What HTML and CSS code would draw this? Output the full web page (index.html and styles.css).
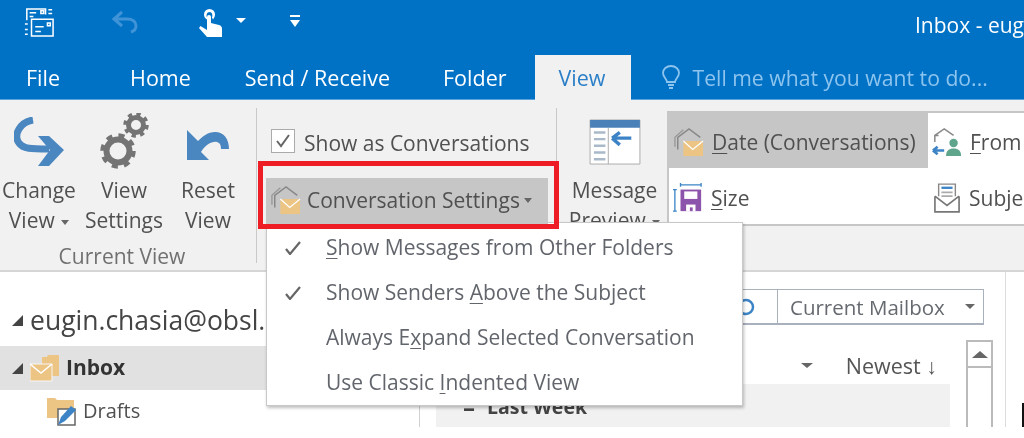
FILE: index.html
```html
<!DOCTYPE html>
<html lang="en">
<head>
<meta charset="utf-8">
<title>Inbox - Outlook</title>
<link rel="stylesheet" href="styles.css">
</head>
<body>
<div class="app">
  <header class="titlebar">
    <svg class="ic-app" viewBox="0 0 32 32" fill="none" stroke="#fff" stroke-width="1.6"><path d="M3 14V2h20v6M6 6h7M6 10h4M18 4h3v3h-3zM26 3h4M26 7h4M1 18h3M1 24h3M1 29h3"/><path d="M8 13h23v18H8z"/><path d="M12 21h9M12 26h6M25 17h3v3h-3z"/></svg>
    <svg class="ic-undo" viewBox="0 0 26 24" fill="none" stroke="#3f93d6" stroke-width="3"><path d="M10 2 2 9l8 7M3 9h12c6 0 9 3 9 7 0 3-2 5-5 6"/></svg>
    <svg class="ic-touch" viewBox="0 0 24 28" fill="#fff"><path d="M6 5.500a5.500 5.500 0 0 1 11 0c0 2-1 3.500-2 5l-1-2c1-2.500 0-5.500-2.500-5.500S8 6 9 8.500v2C7 9.500 6 7.500 6 5.500z"/><path d="M9 8a2 2 0 0 1 4 0v6l8 2c2 .5 3 2 3 4v8H9l-8-9 1.500-2 6.500 4z"/></svg>
    <svg class="ic-caret-w" viewBox="0 0 10 5" fill="#fff"><path d="M0 0h10L5 5z"/></svg>
    <svg class="ic-custom" viewBox="0 0 10 12" fill="#fff"><path d="M0 0h10v2H0zM0 5h10L5 12z"/></svg>
    <div class="title-text">Inbox - eugin.chasia@obsl.com - Outlook</div>
  </header>

  <nav class="tabs">
    <span class="tab tab-file">File</span>
    <span class="tab">Home</span>
    <span class="tab">Send / Receive</span>
    <span class="tab tab-folder">Folder</span>
    <span class="tab tab-active">View</span>
    <span class="tell">
      <svg class="ic-bulb" viewBox="0 0 20 24" fill="none" stroke="#8cc4ee" stroke-width="1.800"><path d="M6 17c0-3-4-5-4-9a8 7 0 0 1 16 0c0 4-4 6-4 9zM7 20h6M8 23h4"/></svg>
      Tell me what you want to do...
    </span>
  </nav>

  <section class="ribbon">
    <div class="group group-view">
      <div class="big-row">
        <div class="big big-change">
          <div class="big-icon">
            <svg class="ic-change" viewBox="0 0 50 50"><path d="M19 3C6 5-1 18 5 26c4 6 12 6 30 6" fill="none" stroke="#4a86c0" stroke-width="7"/><path d="M24 19h11l15 14-15 16H24l12-16z" fill="#4a86c0"/></svg>
          </div>
          <div>Change</div>
          <div>View <i class="caret"></i></div>
        </div>
        <div class="big big-settings">
          <div class="big-icon">
            <svg class="ic-gears" viewBox="0 0 50 58" fill="none" stroke="#747474"><circle cx="19" cy="38" r="11.500" stroke-width="6"/><circle cx="19" cy="38" r="15.500" stroke-width="4.500" stroke-dasharray="6 6.170"/><circle cx="37" cy="12" r="7.500" stroke-width="5"/><circle cx="37" cy="12" r="11" stroke-width="3.500" stroke-dasharray="4.300 4.340"/></svg>
          </div>
          <div>View</div>
          <div>Settings</div>
        </div>
        <div class="big big-reset">
          <div class="big-icon">
            <svg class="ic-reset" viewBox="0 0 44 32" fill="#4a86c0"><path d="M1 1v30h22l-8-8C19 16 26 12 31 13c3 1 4 3 4 7h8C43 10 38 3 29 3c-7 0-12 4-17 9z"/></svg>
          </div>
          <div>Reset</div>
          <div>View</div>
        </div>
      </div>
      <div class="group-label">Current View</div>
    </div>
    <div class="sep"></div>
    <div class="group group-conv">
      <label class="check-row">
        <span class="checkbox"><svg viewBox="0 0 22 22" fill="none" stroke="#666" stroke-width="2"><path d="M5 11l4 5 8-11"/></svg></span>
        Show as Conversations
      </label>
      <div class="frame">
        <div class="conv-btn">
          <svg class="ic-conv" viewBox="0 0 32 32"><path d="M4 24V11L16 2l12 9" fill="none" stroke="#888" stroke-width="1.600"/><path d="M1 21V11L10 3" fill="none" stroke="#999" stroke-width="1.500"/><path d="M10 15h21v16H10z" fill="#ecc483"/><path d="M10 15l10 9 11-9" fill="none" stroke="#fff" stroke-width="1.300"/></svg>
          Conversation Settings
          <i class="caret caret-conv"></i>
        </div>
      </div>
    </div>
    <div class="sep"></div>
    <div class="group group-msg">
      <div class="big-icon">
        <svg class="ic-msg" viewBox="0 0 54 48"><path d="M1 1h52v46H1z" fill="#fff" stroke="#aaa"/><path d="M1 1h52v8H1z" fill="#4a80b8"/><path d="M20 9v38" stroke="#aaa"/><path d="M5 14h12M5 21h12M5 28h12M5 35h12M5 42h12" stroke-width="2.600" stroke="#a9b9c9"/><path d="M24 20h20M24 20l8-6M24 20l8 7" fill="none" stroke="#3d84c6" stroke-width="3.500"/></svg>
      </div>
      <div>Message</div>
      <div>Preview <i class="caret"></i></div>
    </div>
    <div class="gallery">
      <div class="g-item g-selected">
        <svg class="ic-conv g-ic" viewBox="0 0 32 32"><path d="M4 24V11L16 2l12 9" fill="none" stroke="#888" stroke-width="1.600"/><path d="M1 21V11L10 3" fill="none" stroke="#999" stroke-width="1.500"/><path d="M10 15h21v16H10z" fill="#ecc483"/><path d="M10 15l10 9 11-9" fill="none" stroke="#fff" stroke-width="1.300"/></svg>
        <span><u>D</u>ate (Conversations)</span>
      </div>
      <div class="g-item">
        <svg class="ic-conv g-ic" viewBox="0 0 32 32"><path d="M3 16V9L13 2l10 7M3 9h4" fill="none" stroke="#888" stroke-width="1.600"/><circle cx="23" cy="17" r="4.500" fill="#5fa58c"/><path d="M15 31c0-6 3-8 8-8s8 2 8 8z" fill="#5fa58c"/><path d="M1 25h12M1 25l5-4M1 25l5 4" stroke="#3d84c6" fill="none" stroke-width="2.800"/></svg>
        <span><u>F</u>rom</span>
      </div>
      <div class="g-item g-low">
        <svg class="ic-size g-ic" viewBox="0 0 32 32" fill="none"><path d="M8 2h22M8 0v4M30 0v4M2 7v23M0 7h4M0 30h4" stroke="#3d84c6" stroke-width="1.400"/><path d="M8 7h22v23H8z" fill="#8d54ab"/><path d="M12 9h14v8H12z" fill="#fff"/><path d="M14 23h10v7H14z" fill="#fff"/><path d="M18 26h3v4h-3z" fill="#8d54ab"/></svg>
        <span><u>S</u>ize</span>
      </div>
      <div class="g-item g-low">
        <svg class="ic-subject g-ic" viewBox="0 0 28 32" fill="none"><path d="M5 14V1h18v13" stroke="#888" stroke-width="1.500" fill="#fff"/><path d="M8 5h12" stroke="#3d84c6" stroke-width="2.500"/><path d="M8 10h12M8 14h12" stroke="#aaa" stroke-width="1.800"/><path d="M1 14v17h26V14M1 14l13 10 13-10" stroke="#777" stroke-width="1.800"/></svg>
        <span>Subject</span>
      </div>
    </div>
  </section>

  <main class="content">
    <aside class="pane">
      <div class="account"><i class="tri"></i><span>eugin.chasia@obsl.com</span></div>
      <div class="inbox">
        <i class="tri"></i>
        <svg class="ic-inbox" viewBox="0 0 30 28"><path d="M12 3h5l1-2h11v21H12z" fill="#ecc483"/><path d="M0 10h22v17H0z" fill="#ecc483" stroke="#f7f7f7"/><path d="M0 10l11 9 11-9" fill="none" stroke="#fff" stroke-width="1.500"/></svg>
        <b>Inbox</b>
      </div>
      <div class="drafts">
        <svg class="ic-drafts" viewBox="0 0 30 30"><path d="M0 2h8l2 2h17v18H0z" fill="#ecc483"/><path d="M11 13h17v16H11z" fill="#fff" stroke="#666" stroke-width="1.500"/><path d="M11 29l3-8L24 10l5 4L18 25z" fill="#3d84c6"/></svg>
        Drafts
      </div>
    </aside>
    <div class="mid">
      <div class="search">
        <div class="search-input"><svg class="ic-search" viewBox="0 0 12 20" fill="none" stroke="#3d84c6" stroke-width="2.500"><circle cx="3" cy="10" r="7"/></svg></div>
        <div class="scope">Current Mailbox <i class="caret caret-scope"></i></div>
      </div>
      <div class="list-wrap">
        <div class="list">
          <div class="sort"><i class="caret caret-sort"></i><span>Newest ↓</span></div>
          <div class="group-head"><b class="dash">–</b><b>Last Week</b></div>
        </div>
        <div class="scroll"><div class="scroll-up"><i class="tri-up"></i></div></div>
      </div>
    </div>
    <div class="edge"><div class="blackbar"></div></div>
  </main>

  <div class="menu">
    <div class="mi"><svg class="tick" viewBox="0 0 16 14" fill="none" stroke="#666" stroke-width="2.200"><path d="M1 8l4 5L15 1"/></svg><span><u>S</u>how Messages from Other Folders</span></div>
    <div class="mi"><svg class="tick" viewBox="0 0 16 14" fill="none" stroke="#666" stroke-width="2.200"><path d="M1 8l4 5L15 1"/></svg><span>Show Senders <u>A</u>bove the Subject</span></div>
    <div class="mi"><span>Always E<u>x</u>pand Selected Conversation</span></div>
    <div class="mi"><span>Use Classic <u>I</u>ndented View</span></div>
  </div>
</div>
</body>
</html>
```

FILE: styles.css
```css
* { box-sizing: border-box; }
html, body { margin: 0; padding: 0; background: #fff; }
body { font-family: "Open Sans", "Noto Sans", sans-serif; font-size: 21px; color: #505050; }
svg { display: block; flex: none; }
i, b { font-style: normal; }
u { text-underline-offset: 3px; text-decoration-thickness: 1px; }

.app { position: relative; width: 1024px; height: 438px; overflow: hidden; filter: blur(0.55px); }

/* title bar */
.titlebar { display: flex; align-items: center; height: 55px; padding-left: 24px; background: #0072c6; color: #fff; white-space: nowrap; overflow: hidden; }
.ic-app { width: 30px; height: 30px; margin-top: -11px; }
.ic-undo { width: 26px; height: 24px; margin-left: 58px; margin-top: -12px; }
.ic-touch { width: 24px; height: 28px; margin-left: 60px; margin-top: -10px; }
.ic-caret-w { width: 10px; height: 5px; margin-left: 14px; margin-top: -14px; }
.ic-custom { width: 10px; height: 12px; margin-left: 44px; margin-top: -14px; }
.title-text { margin-left: 615px; margin-top: -6px; flex: none; }

/* tabs */
.tabs { display: flex; align-items: stretch; gap: 6px; height: 45px; padding-left: 2px; background: #0072c6; border-bottom: 1px solid #5ba3de; color: #fff; font-size: 21.5px; white-space: nowrap; }
.tab { display: flex; align-items: center; height: 45px; padding: 0 24px; }
.tab-file { margin-right: 16px; }
.tab-folder { padding: 0 22px 0 23px; }
.tab-active { padding: 0 26px 0 24px; background: #f1f1f1; color: #2a7fc8; }
.tell { display: flex; align-items: center; gap: 11px; height: 44px; margin-left: 24px; color: #8cc4ee; font-size: 21.2px; }
.ic-bulb { width: 20px; height: 24px; }

/* ribbon */
.ribbon { display: flex; align-items: flex-start; height: 172px; padding-top: 8px; background: #f1f1f1; border-bottom: 2px solid #d6d6d6; }
.group { flex: none; }
.sep { flex: none; width: 1px; height: 155px; background: #c9c9c9; }
.group-view { width: 256px; }
.big-row { display: flex; height: 127px; text-align: center; line-height: 30px; }
.big-icon { display: flex; align-items: center; justify-content: center; height: 67px; }
.big-change { width: 78px; }
.big-settings { width: 86px; margin-left: 3px; }
.big-reset { width: 68px; margin-left: 7px; }
.ic-change { width: 50px; height: 50px; }
.ic-gears { width: 50px; height: 58px; }
.ic-reset { width: 44px; height: 32px; margin-top: 6px; }
.caret { display: inline-block; width: 0; height: 0; margin-left: 1px; vertical-align: 3px; border: 4.500px solid transparent; border-top: 5px solid #666; border-bottom: 0; }
.group-label { padding: 7px 12px 0 0; text-align: center; line-height: 28px; color: #707070; }

.group-conv { width: 299px; }
.check-row { display: flex; align-items: center; gap: 9px; height: 53px; padding: 16px 0 0 14px; }
.checkbox { display: block; width: 24px; height: 24px; margin-top: -3px; background: #fff; border: 1px solid #aaa; }
.frame { position: relative; z-index: 3; width: 301px; height: 68px; margin-left: 1px; padding: 12px 6px 0 3px; border: 5px solid #ee1c25; }
.conv-btn { display: flex; align-items: center; gap: 6px; height: 46px; padding: 0 0 2px 5px; background: #c6c6c6; white-space: nowrap; }
.ic-conv { width: 30px; height: 32px; }
.caret-conv { margin: 0 0 0 -2px; }

.group-msg { width: 110px; padding-left: 5px; text-align: center; line-height: 30px; white-space: nowrap; }
.ic-msg { width: 52px; height: 46px; }

.gallery { flex: none; display: grid; grid-template-columns: 259px 110px; grid-template-rows: 55px 56px; width: 357px; height: 115px; margin-top: 3px; background: #fff; border: 2px solid #c6c6c6; border-right: 0; overflow: hidden; }
.g-item { display: flex; align-items: center; gap: 8px; padding: 3px 0 0 4px; white-space: nowrap; }
.g-low { padding-top: 4px; }
.g-selected { background: #c6c6c6; padding-left: 5px; }
.ic-size { width: 30px; height: 30px; }
.ic-subject { width: 26px; height: 30px; margin-left: 2px; margin-right: 1px; }

/* content */
.content { display: flex; height: 155px; overflow: hidden; background: #fff; }
.pane { flex: none; width: 420px; border-right: 1px solid #d0d0d0; }
.tri { display: block; flex: none; width: 0; height: 0; border-style: solid; border-width: 0 0 11px 11px; border-color: transparent transparent #444 transparent; }
.account { display: flex; align-items: center; gap: 7px; height: 48px; margin-top: 26px; padding: 0 0 4px 12px; font-size: 26.5px; color: #444; white-space: nowrap; overflow: hidden; }
.inbox { display: flex; align-items: center; height: 44px; padding: 0 0 3px 12px; background: #e1e1e1; color: #333; }
.inbox .tri, .inbox .ic-inbox { margin-top: 3px; }
.ic-inbox { width: 30px; height: 28px; margin-left: 7px; margin-right: 6px; }
.drafts { display: flex; align-items: center; gap: 6px; height: 41px; padding-left: 47px; font-size: 20px; }
.ic-drafts { width: 30px; height: 30px; }

.mid { flex: none; width: 586px; border-right: 1px solid #dcdcdc; }
.search { display: flex; width: 564px; height: 36px; margin-top: 17px; border: 1px solid #a9b1bd; border-bottom-width: 2px; }
.search-input { flex: none; display: flex; align-items: center; justify-content: flex-end; width: 356px; padding-right: 22px; }
.ic-search { width: 12px; height: 20px; }
.scope { flex: 1; display: flex; align-items: center; justify-content: space-between; padding: 0 8px 0 12px; border-left: 1px solid #a9b1bd; font-size: 20.5px; color: #666a70; white-space: nowrap; }
.caret-scope { border-width: 5px 5px 0; }
.list-wrap { display: flex; }
.list { flex: none; width: 514px; margin: 0 16px; }
.sort { display: flex; align-items: center; justify-content: flex-end; height: 59px; padding: 21px 13px 0 0; font-size: 21.5px; color: #555; }
.caret-sort { margin-right: 33px; border-width: 5px 6px 0; }
.group-head { display: flex; align-items: center; gap: 12px; height: 43px; padding: 2px 0 0 27px; background: #f1f1f1; color: #444; font-size: 19.5px; }
.dash { font-size: 24px; }
.scroll { flex: none; width: 27px; height: 90px; margin-top: 15px; border: 2px solid #bbb; border-bottom: 0; }
.scroll-up { display: flex; align-items: center; justify-content: center; height: 26px; border-bottom: 2px solid #bbb; }
.tri-up { display: block; width: 0; height: 0; border: 8px solid transparent; border-bottom: 7px solid #666; border-top: 0; }
.edge { flex: 1; display: flex; justify-content: flex-end; align-items: flex-end; }
.blackbar { width: 2px; height: 24px; background: #111; }

/* dropdown */
.menu { position: absolute; left: 266px; top: 222px; z-index: 2; width: 477px; height: 184px; padding-top: 1px; background: #fff; border: 1px solid #c8c8c8; box-shadow: 1px 2px 3px rgba(0,0,0,.25); }
.mi { position: relative; display: flex; align-items: center; height: 45px; padding-left: 59px; color: #62666c; white-space: nowrap; }
.tick { position: absolute; left: 18px; top: 17px; width: 16px; height: 14px; }
```
